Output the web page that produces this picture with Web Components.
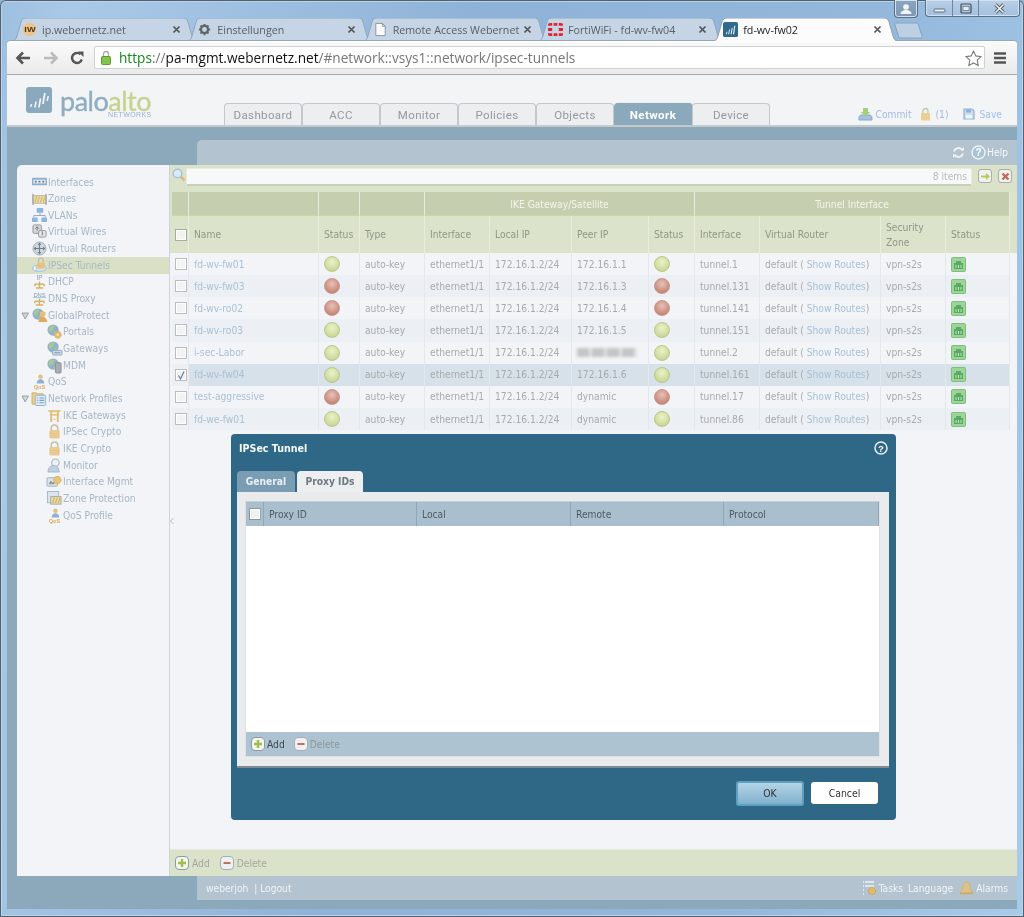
<!DOCTYPE html>
<html lang="en"><head><meta charset="utf-8"><title>fd-wv-fw02</title>
<style>
html,body{margin:0;padding:0;background:#8fb5da}
body{width:1024px;height:917px;overflow:hidden;font-family:"DejaVu Sans Condensed","DejaVu Sans",sans-serif;font-size:10.2px}
</style></head><body>
<x-window>
  <chrome-tab slot="tabs" icon="fav-ww" label="ip.webernetz.net"></chrome-tab>
  <chrome-tab slot="tabs" icon="fav-gear" label="Einstellungen"></chrome-tab>
  <chrome-tab slot="tabs" icon="fav-doc" label="Remote Access Webernet"></chrome-tab>
  <chrome-tab slot="tabs" icon="fav-forti" label="FortiWiFi - fd-wv-fw04"></chrome-tab>
  <chrome-tab slot="tabs" icon="fav-pa" label="fd-wv-fw02" active></chrome-tab>
  <chrome-toolbar slot="toolbar"></chrome-toolbar>
  <pa-header>
    <pa-tab>Dashboard</pa-tab><pa-tab>ACC</pa-tab><pa-tab>Monitor</pa-tab><pa-tab>Policies</pa-tab><pa-tab>Objects</pa-tab><pa-tab active>Network</pa-tab><pa-tab>Device</pa-tab>
  </pa-header>
  <pa-subbar></pa-subbar>
  <pa-body>
    <pa-nav slot="nav">
      <pa-item icon="interfaces">Interfaces</pa-item>
      <pa-item icon="zones">Zones</pa-item>
      <pa-item icon="vlans">VLANs</pa-item>
      <pa-item icon="vwires">Virtual Wires</pa-item>
      <pa-item icon="routers">Virtual Routers</pa-item>
      <pa-item icon="ipsec" selected>IPSec Tunnels</pa-item>
      <pa-item icon="dhcp">DHCP</pa-item>
      <pa-item icon="dns">DNS Proxy</pa-item>
      <pa-item icon="gp" open>GlobalProtect</pa-item>
      <pa-item icon="portals" child>Portals</pa-item>
      <pa-item icon="gateways" child>Gateways</pa-item>
      <pa-item icon="mdm" child>MDM</pa-item>
      <pa-item icon="qos">QoS</pa-item>
      <pa-item icon="profiles" open>Network Profiles</pa-item>
      <pa-item icon="torii" child>IKE Gateways</pa-item>
      <pa-item icon="lock" child>IPSec Crypto</pa-item>
      <pa-item icon="lock" child>IKE Crypto</pa-item>
      <pa-item icon="monitor" child>Monitor</pa-item>
      <pa-item icon="imgmt" child>Interface Mgmt</pa-item>
      <pa-item icon="zprot" child>Zone Protection</pa-item>
      <pa-item icon="qos" child>QoS Profile</pa-item>
    </pa-nav>
    <pa-search></pa-search>
    <pa-table-head></pa-table-head>
    <pa-row name="fd-wv-fw01" s1="g" peer="172.16.1.1" s2="g" tun="tunnel.1"></pa-row>
    <pa-row alt name="fd-wv-fw03" s1="r" peer="172.16.1.3" s2="r" tun="tunnel.131"></pa-row>
    <pa-row name="fd-wv-ro02" s1="r" peer="172.16.1.4" s2="r" tun="tunnel.141"></pa-row>
    <pa-row alt name="fd-wv-ro03" s1="g" peer="172.16.1.5" s2="g" tun="tunnel.151"></pa-row>
    <pa-row name="i-sec-Labor" s1="g" peer="" s2="g" tun="tunnel.2"></pa-row>
    <pa-row sel checked name="fd-wv-fw04" s1="g" peer="172.16.1.6" s2="g" tun="tunnel.161"></pa-row>
    <pa-row name="test-aggressive" s1="r" peer="dynamic" s2="r" tun="tunnel.17"></pa-row>
    <pa-row alt name="fd-we-fw01" s1="g" peer="dynamic" s2="g" tun="tunnel.86"></pa-row>
    <pa-actions slot="footer"></pa-actions>
  </pa-body>
  <pa-status></pa-status>
  <pa-dialog slot="over"></pa-dialog>
</x-window>
<script>
const svg=(b,w=16,h=16)=>`<svg xmlns="http://www.w3.org/2000/svg" width="${w}" height="${h}" viewBox="0 0 ${w} ${h}" style="display:block;overflow:visible">${b}</svg>`;
const globe=`<circle cx="6.5" cy="6.5" r="6" fill="#8fb2cf"/><path d="M2 4c2-3 5-3 6-2 1 2-2 2-2 4s-3 3-4 1zM8 8c2-1 4 0 3 2s-3 2-4 1z" fill="#a9c78f"/>`;
const person=`<circle cx="9" cy="3" r="2.4" fill="#e6bf7c"/><path d="M5 10c0-3 2-4.500 4-4.500s4 1.500 4 4.500z" fill="#8fb0d2"/><text x="8" y="15.500" font-size="6" font-weight="700" text-anchor="middle" font-family="Liberation Sans,sans-serif" fill="#e0a95b">QoS</text>`;
const lockI=`<path d="M4.500 7V4.500a3.500 3.500 0 0 1 7 0V7" fill="none" stroke="#c9bda6" stroke-width="1.600"/><rect x="3" y="7" width="10" height="8" rx="1" fill="#eccf94" stroke="#d9b878" stroke-width=".6"/><path d="M3.500 10h9M3.500 12.500h9" stroke="#dfbc78" stroke-width=".7"/>`;
const net=`<path d="M8 8v3M3 11h10M3 11v2M13 11v2M8 11v4M4 15h8" stroke="#d6b367" stroke-width="1.600" fill="none"/>`;
const ICONS={
 interfaces:`<rect x="0" y="3" width="16" height="8" rx="1" fill="#8eaecb"/><rect x="1.500" y="5" width="13" height="4" fill="#e9eef3"/><path d="M3 6h2v2H3zM7 6h2v2H7zM11 6h2v2h-2z" fill="#64788c"/>`,
 zones:`<path d="M1 5h14v8H1z" fill="#e9dfae" stroke="#b4b0a0" stroke-width="1"/><path d="M1 3v12M15 3v12" stroke="#a7a59a" stroke-width="1.300"/><path d="M3 12l2-6M6 12l2-6M9 12l2-6M12 12l2-6" stroke="#d9b86a" stroke-width="1.300"/>`,
 vlans:`<rect x="5" y="0" width="7" height="5" rx=".7" fill="#8db6dc"/><path d="M8.500 5v3M2 8h12M2 8v2M14 8v2" stroke="#8ba8c4"/><rect x="0" y="10" width="6" height="5" rx=".7" fill="#8db6dc"/><rect x="10" y="10" width="6" height="5" rx=".7" fill="#8db6dc"/>`,
 vwires:`<rect x="1" y="1" width="9" height="9" rx="1.500" fill="#d6d8d8" stroke="#8f959a"/><rect x="7" y="7" width="8" height="7" rx="1.500" fill="#e4e5e5" stroke="#8f959a"/><path d="M5.500 3v4M3.500 5l2-2 2 2M11 8v4" stroke="#72787e" fill="none"/>`,
 routers:`<circle cx="8" cy="8" r="7" fill="#ced5db" stroke="#a7b2bc"/><path d="M8 2.500v11M2.500 8h11M6.500 4L8 2.500 9.500 4M6.500 12L8 13.500 9.500 12M4 6.500L2.500 8 4 9.500M12 6.500L13.500 8 12 9.500" stroke="#6f7f8e" fill="none" stroke-width="1.100"/>`,
 ipsec:`<path d="M1 10c0-3 14-3 14 0v2c0 3-14 3-14 0z" fill="#d7e6f3" stroke="#a0c0db"/><ellipse cx="3" cy="11" rx="1.800" ry="3" fill="#eef4f8" stroke="#a0c0db" stroke-width=".8"/><path d="M7 5V2.500a2.500 2.500 0 0 1 5 0V5" fill="none" stroke="#c7b89d" stroke-width="1.300"/><rect x="5.500" y="5" width="8" height="6.500" rx="1" fill="#e7c37f"/>`,
 dhcp:`<text x="8" y="6.500" font-size="7" text-anchor="middle" font-family="Liberation Sans,sans-serif" fill="#7f9dba">IP</text>`+net,
 dns:`<text x="8" y="6" font-size="6.200" text-anchor="middle" font-family="Liberation Sans,sans-serif" fill="#7f9dba">DNS</text><path d="M1 7h14" stroke="#7f9dba" stroke-width=".6"/>`+net,
 gp:globe+`<circle cx="11.500" cy="6.500" r="3" fill="#e9bd7b"/><path d="M7 15c0-4 2-5.500 4.500-5.500S16 11 16 15z" fill="#e2a75c"/>`,
 portals:globe+`<circle cx="11.500" cy="11.500" r="3.600" fill="#e5bd72" stroke="#cf9f52" stroke-dasharray="1.500 .8"/><circle cx="11.500" cy="11.500" r="1.200" fill="#f4ead2"/>`,
 gateways:globe+`<rect x="6" y="10" width="10" height="5" rx="1" fill="#cdd9e4" stroke="#8faac2"/><path d="M8 12.500h6" stroke="#7d96ac"/>`,
 mdm:globe+`<rect x="9" y="5" width="6" height="11" rx="1" fill="#a8adb1" stroke="#8b9196"/>`,
 qos:person,
 profiles:`<path d="M0 2h5l1 1h6v11H0z" fill="#edcf8f" stroke="#d2ae69"/><rect x="3.500" y="4.500" width="11" height="11" rx="1" fill="#dce9f4" stroke="#8fb3d3"/><path d="M5.500 7.500h1M8 7.500h5M5.500 10h1M8 10h5M5.500 12.500h1M8 12.500h5" stroke="#7fa2c2" stroke-width="1.100"/>`,
 torii:`<path d="M1 2h14l-1 2.500H2zM3 6.500h10v1.700H3z" fill="#e5c88a"/><path d="M4.500 3v12M11.500 3v12" stroke="#e0bd78" stroke-width="2"/><path d="M7 12h2" stroke="#d7b069"/>`,
 lock:lockI,
 monitor:`<circle cx="9" cy="5" r="4" fill="#eef1f4" stroke="#a9b6c4" stroke-width="1.200"/><path d="M1 15c0-5 3-7 6-7s6 2 6 7z" fill="#bfd0e0" stroke="#94a9bd" stroke-width=".7"/>`,
 imgmt:`<rect x="0" y="4" width="11" height="9" rx="1" fill="#dde3e8" stroke="#9fb0bf"/><path d="M2 10l2-3 2 2 2-1v3H2z" fill="#8a9aa8"/><circle cx="11" cy="6.500" r="4" fill="#e7c47c" stroke="#d1a85b" stroke-dasharray="1.500 .8"/>`,
 zprot:`<rect x="0.500" y="0.500" width="12" height="12" fill="#dbe5ee" stroke="#a4b8ca"/><rect x="4" y="6" width="11" height="8" fill="#e9dfae" stroke="#a9a79b"/><path d="M6 13l2-6M9 13l2-6M12 13l2-6" stroke="#d0ae60" stroke-width="1.200"/>`,
 'fav-ww':`<circle cx="8" cy="8" r="7" fill="#eec184"/><text x="8.500" y="11" text-anchor="middle" font-size="8" font-weight="700" font-family="Liberation Sans,sans-serif" fill="#4c3a24" textLength="12" lengthAdjust="spacingAndGlyphs">IW</text>`,
 'fav-gear':`<g transform="translate(8 8)"><circle r="3.800" fill="none" stroke="#5f6468" stroke-width="2.300"/><path d="M-1 -6h2v2h-2zM-1 4h2v2h-2zM-6 -1h2v2h-2zM4 -1h2v2h-2z" fill="#5f6468"/><g transform="rotate(45)"><path d="M-1 -6h2v2h-2zM-1 4h2v2h-2zM-6 -1h2v2h-2zM4 -1h2v2h-2z" fill="#5f6468"/></g></g>`,
 'fav-doc':`<path d="M3 1.500h7l3 3v10H3z" fill="#fbfbfb" stroke="#8c9297"/><path d="M10 1.500v3h3" fill="none" stroke="#8c9297"/>`,
 'fav-forti':`<path d="M0 3a2 2 0 0 1 2-2h2.500v3H0zM6 1h4v3H6zM11.500 1H14a2 2 0 0 1 2 2v1h-4.500zM0 6.500h4.500v3H0zM11.500 6.500H16v3h-4.500zM0 12h4.500v3H2a2 2 0 0 1-2-2zM6 12h4v3H6zM11.500 12H16v1a2 2 0 0 1-2 2h-2.500z" fill="#e3222b"/>`,
 'fav-pa':`<rect width="16" height="16" rx="2" fill="#2e6a8d"/><path d="M3 13l.8-2.500h1L4 13zM5.500 13l1-5h1l-1 5zM8 13l1.200-7h1.100L9.200 13zM10.500 13l1.500-9h1.200L11.800 13z" fill="#e6eef2"/>`
};
function def(tag,css,html){
  customElements.define(tag,class extends HTMLElement{
    constructor(){super();this.attachShadow({mode:'open'});}
    connectedCallback(){this.shadowRoot.innerHTML=`<style>${css}</style>`+(typeof html==='function'?html(this):html);}
  });
}
const Ic=(n)=>`<x-icon name="${n}"></x-icon>`;
customElements.define('x-icon',class extends HTMLElement{
  constructor(){super();this.attachShadow({mode:'open'});}
  connectedCallback(){this.shadowRoot.innerHTML=`<style>:host{display:block;flex:none;width:16px;height:16px}svg{width:15px;height:15px;margin:.5px 0 0 0}</style>`+svg(ICONS[this.getAttribute('name')]||'');}
});

def('x-window',`
:host{display:flex;flex-direction:column;position:relative;box-sizing:border-box;width:1024px;height:917px;padding:0 7px 8px;
 background:linear-gradient(100deg,#9dbfe0 0,#a9c9e8 6%,#8fb3d8 40%,#93b8dc 75%,#a8cbea 100%);box-shadow:inset 0 0 0 1px #52606e,inset 0 0 0 2px #bcd3ea;border-radius:6px 6px 0 0;filter:blur(.45px)}
.tabs{display:flex;height:41px;box-sizing:border-box;padding:18px 0 0 5px;flex:none}
.new{width:28px;height:15px;margin:5px 0 0 6px;flex:none}
.ctl{position:absolute;top:0;display:flex;height:17px;background:linear-gradient(#b9cfe6,#a3c0de);border:1px solid #5d6f82;border-top:0;box-sizing:border-box;border-radius:0 0 4px 4px;box-shadow:inset 0 0 0 1px #d3e2f0}
.ctl span{display:flex;align-items:center;justify-content:center;border-left:1px solid #6f869c}
.ctl span:first-child{border-left:0}
.usr{left:894px;width:24px;height:18px;justify-content:center;align-items:center;background:linear-gradient(#8ba5c0,#7f97b0)}
.min{left:925px;width:95px}
.pane{display:flex;flex-direction:column;flex:1;min-height:0;background:#8ba9bb}
`,`<div class="tabs"><slot name="tabs"></slot><div class="new">${svg('<path d="M1 0h20c1.500 0 2 .5 2.500 2L27 13c.3 1 0 2-1.500 2H6c-1.500 0-2-.5-2.500-2L0 2C-.3 1 0 0 1 0z" fill="#bcd0e4" stroke="#88a3bd"/>',28,15)}</div></div>
<div class="ctl usr">${svg('<circle cx="7" cy="4" r="2.800" fill="#f2f5f8"/><path d="M1.500 11c0-3 3-4 5.500-4s5.500 1 5.500 4z" fill="#f2f5f8"/>',14,12)}</div>
<div class="ctl min"><span style="width:26px">${svg('<rect x="1" y="5" width="11" height="3" rx=".8" fill="#eef3f8" stroke="#5e6c7a"/>',13,9)}</span><span style="width:25px">${svg('<rect x="1" y="1" width="10" height="9" rx="1" fill="none" stroke="#42505e" stroke-width="1.200"/><rect x="3" y="3.500" width="6" height="4" fill="#e8eef5" stroke="#5e6c7a" stroke-width=".7"/>',12,11)}</span><span style="flex:1">${svg('<path d="M1.500 1.500l8 8M9.500 1.500l-8 8" stroke="#4b5966" stroke-width="3.200"/><path d="M1.500 1.500l8 8M9.500 1.500l-8 8" stroke="#f3f6f9" stroke-width="1.500"/>',11,11)}</span></div>
<slot name="toolbar"></slot>
<div class="pane"><slot></slot></div>
<slot name="over"></slot>`);

def('chrome-tab',`
:host{display:block;position:relative;width:185px;height:23px;margin-right:-9.7px;font:10.7px "Open Sans",sans-serif;color:#585e64;flex:none}
:host([active]){z-index:2;color:#222}
svg.bg{position:absolute;left:0;top:0}
.in{position:relative;display:flex;align-items:center;height:23px;padding-left:10px;box-sizing:border-box}
x-icon{margin-right:4px}
.t{width:130px;white-space:nowrap}
.x{position:absolute;left:160px;top:7px}
`,e=>{const a=e.hasAttribute('active');const label=e.getAttribute('label');
return `<svg class="bg" width="185" height="23" viewBox="0 0 185 23"><path d="M0 23c3 0 4-2 5-5l4-14c1-3 2-4 5-4h157c3 0 4 1 5 4l4 14c1 3 2 5 5 5" fill="${a?'#fcfcfc':'#c5d5e5'}" stroke="${a?'#8da2b8':'#8fa8c0'}"/></svg>
<div class="in">${Ic(e.getAttribute('icon'))}<div class="t">${label}</div></div>
<div class="x">${svg('<path d="M1.500 1.500l6 6M7.500 1.500l-6 6" stroke="#555" stroke-width="1.700"/>',9,9)}</div>`});

def('chrome-toolbar',`
:host{display:flex;align-items:center;position:relative;height:34px;flex:none;box-sizing:border-box;padding:0 0 0 9px;background:linear-gradient(#fafafa,#ebebeb);border-bottom:1px solid #a7aaad;border-radius:4px 4px 0 0;box-shadow:inset 0 1px 0 #fff,0 -1px 0 #93a8bd}
.n{display:flex;align-items:center;width:27px}
.addr{flex:none;display:flex;align-items:center;margin-left:-1px;width:891px;height:23px;box-sizing:border-box;background:#fff;border:1px solid #cfd1d3;border-radius:2px;padding-left:6px;font:13.65px "Open Sans",sans-serif;color:#777;white-space:nowrap}
.g{color:#12891a}.k{color:#111}
.lk{margin-right:8px}
.star{margin-left:auto;margin-right:2px}
.menu{margin-left:9px}
`,`<div class="n">${svg('<path d="M7 1.500L1.500 7 7 12.500M2 7h12" fill="none" stroke="#555" stroke-width="2.600"/>',15,14)}</div>
<div class="n">${svg('<path d="M8 1.500L13.500 7 8 12.500M13 7H1" fill="none" stroke="#b9bbbd" stroke-width="2.600"/>',15,14)}</div>
<div class="n" style="width:25px">${svg('<path d="M11.800 8.500A5 5 0 1 1 10.500 3.300" fill="none" stroke="#555" stroke-width="2.400"/><path d="M8 .5h5.500V6z" fill="#555"/>',14,14)}</div>
<div class="addr"><span class="lk">${svg('<path d="M2.500 7V4a2.500 2.500 0 0 1 5 0v3" fill="none" stroke="#a8a8a8" stroke-width="1.300"/><rect x=".5" y="6.500" width="9" height="8" rx="1" fill="#84c34c" stroke="#5f9a2e"/>',10,15)}</span><span class="g">https</span>://<span class="k">pa-mgmt.webernetz.net</span>/#network::vsys1::network/ipsec-tunnels
<span class="star">${svg('<path d="M8.500 1l2.300 4.900 5.200.7-3.800 3.600 1 5.300-4.700-2.600-4.700 2.600 1-5.300L1 6.600l5.200-.7z" fill="#fff" stroke="#7a7d80" stroke-width="1.100"/>',17,16)}</span></div>
<div class="menu">${svg('<path d="M0 1.500h12M0 6h12M0 10.500h12" stroke="#555" stroke-width="2.400"/>',12,12)}</div>`);

def('pa-header',`
:host{display:flex;align-items:flex-end;height:52px;box-sizing:border-box;flex:none;background:#f3f4f6;border-bottom:2px solid #c7cacd;position:relative}
.logo{width:217px;align-self:stretch;display:flex;box-sizing:border-box;padding:12px 0 0 19px;flex:none}
.word{margin-left:8px;position:relative;font:27px/27px Lato,sans-serif;color:#8fadc0;letter-spacing:-.5px;height:30px;-webkit-text-stroke:.35px currentColor}
.word b{font-weight:400;color:#c6d38f}
.word small{position:absolute;left:48px;top:24px;font:7px/8px "Liberation Sans",sans-serif;letter-spacing:.4px;color:#9ab3c9;-webkit-text-stroke:0}
.right{margin-left:auto;display:flex;align-items:center;height:22px;font-size:10.2px;color:#a1bce6;padding-right:15px}
.right span{margin-left:3px}
`,`<div class="logo">${svg('<rect width="26" height="26" rx="3" fill="#8aa9bd"/><path d="M4 20l.8-3h1.500L5.500 20zM8 20.500l1.300-6h1.600l-1.300 6zM12 20.500l1.700-9h1.700l-1.700 9zM16 17l2-11h1.800l-2 11zM20.500 14l1-5h1.500l-1 5z" fill="#f1f4f6"/>',26,26)}<div class="word">palo<b>alto</b><small>NETWORKS</small></div></div>
<slot></slot>
<div class="right">${svg('<path d="M1 11c0-2 1-3 3-3h7c2 0 3 1 3 3v2H1z" fill="#a4c2dd" stroke="#87a9c7"/><path d="M5 1h5v4h2.500L7.500 9l-5-4H5z" fill="#a4cf7c"/>',15,15)}<span style="margin:0 8px 0 3px">Commit</span>${svg('<path d="M3 6V4a2.500 2.500 0 0 1 5 0v2" fill="none" stroke="#c7c0b0" stroke-width="1.300"/><rect x="1" y="6" width="9" height="7.500" rx="1" fill="#eccf94"/>',11,14)}<span style="margin:0 14px 0 5px">(1)</span>${svg('<path d="M1 1h8l2 2v8H1z" fill="#cfdff0" stroke="#8db0d6" stroke-width="1.200"/><rect x="3" y="1.500" width="5" height="3" fill="#8db0d6"/><rect x="3" y="7" width="6" height="3.500" fill="#eef4fa"/>',12,12)}<span style="margin-left:5px">Save</span></div>`);

def('pa-tab',`
:host{display:flex;align-items:center;justify-content:center;width:78px;height:22px;box-sizing:border-box;padding-top:1px;background:#eceef0;border:1px solid #c5c8ca;border-bottom:0;border-radius:4px 4px 0 0;font:11.5px Roboto,sans-serif;letter-spacing:.35px;color:#94999c}
:host([active]){background:#8ba9bb;border-color:#8ba9bb;color:#fff;font-weight:700;box-shadow:1px 0 1px #aab;letter-spacing:.45px}
`,`<slot></slot>`);

def('pa-subbar',`
:host{display:block;flex:none;height:38px;box-sizing:border-box;padding:13px 0 0 190px;background:#8ba9bb}
.b{height:25px;background:#b3c4d0;border-radius:5px 0 0 0;display:flex;justify-content:flex-end;align-items:center;padding-right:9px;color:#f4f7f8;font-size:10.2px}
.b svg{margin-right:6px}
`,`<div class="b">${svg('<path d="M2 5.500a4.700 4.700 0 0 1 8.500-1.300M11 7.500a4.700 4.700 0 0 1-8.500 1.300" fill="none" stroke="#eef2f4" stroke-width="1.800"/><path d="M8.500 4.500H12V1zM4.500 8.500H1V12z" fill="#eef2f4"/>',13,13)}${svg('<circle cx="7.500" cy="7.500" r="6.500" fill="#a9c3d6" stroke="#eef3f5" stroke-width="1.400"/><text x="7.500" y="11" text-anchor="middle" font-size="10" font-weight="700" font-family="Liberation Sans,sans-serif" fill="#fff">?</text>',15,15).replace('display:block','display:block;margin-right:1px')}Help</div>`);

def('pa-body',`
:host{display:flex;flex:1;min-height:0;box-sizing:border-box;padding-left:10px;background:#8ba9bb}
.nav{flex:none;background:#f2f4f7;border-radius:5px 0 0 0;border-right:1px solid #ccd3da;width:153px;box-sizing:border-box}
.main{flex:1;min-width:0;display:flex;flex-direction:column;background:#f2f4f7;position:relative}
.fill{flex:1}
.split{position:absolute;left:0;top:353px}
`,`<div class="nav"><slot name="nav"></slot></div><div class="main"><slot></slot><div class="fill"></div><slot name="footer"></slot><div class="split">${svg('<path d="M3.500 0L.5 3l3 3" fill="none" stroke="#b5bcc3"/>',4,6)}</div></div>`);

def('pa-nav',`:host{display:block;padding-top:8.7px}`,`<slot></slot>`);

def('pa-item',`
:host{display:flex;align-items:center;height:16.67px;box-sizing:border-box;padding-left:15px;white-space:nowrap;color:#a8b7c5;font-size:10.2px}
:host([child]){padding-left:30px}
:host([selected]){background:#d9e0c6}
:host([open]){padding-left:4px}
.a{width:11px;flex:none}
`,e=>`${e.hasAttribute('open')?`<div class="a">${svg('<path d="M1 2h6.500L4.200 8z" fill="#cfd5d9" stroke="#9aa3a9"/>',9,9)}</div>`:''}${Ic(e.getAttribute('icon'))}<slot></slot>`);

def('pa-search',`
:host{display:flex;align-items:flex-start;height:27px;box-sizing:border-box;flex:none;background:#dbe2ca;padding:3px 0 0 2px}
.i{width:14px;height:15px}
.f{width:786px;height:18px;box-sizing:border-box;background:#f7f8f8;border:1px solid #e8ebe0;border-bottom:2px solid #c9cfbb;border-radius:2px;text-align:right;padding:2px 4px 0;color:#b9bcb9;font-size:10.2px}
.b{width:14px;height:14px;box-sizing:border-box;margin-top:1px;border:1px solid #a9aea6;border-radius:3px;background:#f1f2ee;display:flex;align-items:center;justify-content:center}
`,`<div class="i">${svg('<path d="M8.500 8.500l4 4" stroke="#e5b880" stroke-width="2.500"/><circle cx="5.500" cy="5.500" r="4.300" fill="#dbeaf6" stroke="#a6c3dc" stroke-width="1.500"/>',14,14)}</div><div class="f">8 items</div>
<div class="b" style="margin-left:6px">${svg('<path d="M1 4.500h6" stroke="#b9c95e" stroke-width="2"/><path d="M6 1l4 3.500L6 8z" fill="#b9c95e"/>',10,9)}</div>
<div class="b" style="margin-left:6px">${svg('<path d="M1.500 1.500l6 6M7.500 1.500l-6 6" stroke="#bf6d5e" stroke-width="2.400"/>',9,9)}</div>`);

const COLS='grid-template-columns:17px 130px 41px 65px 65px 82px 77px 46px 65px 121px 65px 64px';
def('pa-table-head',`
:host{display:block;flex:none;background:#dbe3cb;padding-left:2px}
.g{display:grid;${COLS};width:838px;grid-template-rows:24px 37px;color:#92978a;font-size:10.2px}
.g>div{display:flex;align-items:center;padding-left:5px;box-sizing:border-box;border-right:1px solid #e9eddd;line-height:15px}
.t{background:#c5cfb0;color:#f3f5ea;justify-content:center;padding-left:0!important;border-bottom:1px solid #c9d6a6;padding-top:1px}
.c{padding-left:3px!important}
.cb{width:12px;height:12px;box-sizing:border-box;border:1px solid #a7aca0;background:#f3f4f0;box-shadow:inset 0 0 0 1px #fff}
`,`<div class="g"><div class="t"></div><div class="t"></div><div class="t"></div><div class="t"></div><div class="t" style="grid-column:span 4">IKE Gateway/Satellite</div><div class="t" style="grid-column:span 4">Tunnel Interface</div>
<div class="c"><div class="cb"></div></div>${['Name','Status','Type','Interface','Local IP','Peer IP','Status','Interface','Virtual Router','Security<br>Zone','Status'].map(x=>`<div><span>${x}</span></div>`).join('')}</div>`);

const dot=c=>`<div class="dot ${c}"></div>`;
def('pa-row',`
:host{display:block;flex:none;padding-left:2px;height:22.15px}
.g{display:grid;${COLS};width:838px;height:22.15px;background:#f3f4f7;color:#a7abae;font-size:10.2px;white-space:nowrap}
:host([alt]) .g{background:#eceff3}
:host([sel]) .g{background:#d6e1e9}
:host([sel]) .c{background:#edeff2}
.g>div{display:flex;align-items:center;padding-left:5px;box-sizing:border-box;border-right:1px solid #e4e7eb}
.c{padding-left:3px!important}
.cb{width:12px;height:12px;box-sizing:border-box;border:1px solid #b9bdc1;background:#f2f3f5;box-shadow:inset 0 0 0 1px #fff;position:relative}
.l{color:#a9c1d6}
.dot{width:16px;height:16px;border-radius:50%;box-sizing:border-box;border:1px solid #b8c98b}
.dot.g1{background:radial-gradient(circle at 50% 35%,#ecf2c8,#cbd99a 70%,#b9ca82)}
.dot.r1{background:radial-gradient(circle at 50% 35%,#e6c3b8,#c9897a 70%,#b8796a);border-color:#c4988d}
.blob{width:60px;height:9px;filter:blur(1.500px);background:repeating-linear-gradient(90deg,#c3c6c9 0 12px,#dfe1e4 12px 15px)}
`,e=>{const A=n=>e.getAttribute(n),s=v=>dot(v==='g'?'g1':'r1');
return `<div class="g"><div class="c"><div class="cb">${e.hasAttribute('checked')?svg('<path d="M2.500 5.500L4.500 9 8 1.500" fill="none" stroke="#6a78b0" stroke-width="1.200"/>',10,10):''}</div></div>
<div class="l">${A('name')}</div><div>${s(A('s1'))}</div><div>auto-key</div><div>ethernet1/1</div><div>172.16.1.2/24</div><div>${A('peer')||'<div class="blob"></div>'}</div><div>${s(A('s2'))}</div><div>${A('tun')}</div><div>default (&nbsp;<span class="l">Show Routes</span>)</div><div>vpn-s2s</div>
<div>${svg('<rect x=".5" y=".5" width="14" height="14" rx="1" fill="#9ed39a" stroke="#7cc07c"/><path d="M3 12V6h2V4h5v2h2v6z" fill="#5aaa66"/><path d="M5 8v3M7.500 8v3M10 8v3" stroke="#bfe6bc"/>',15,15)}</div></div>`});

const addI=`<rect x=".5" y=".5" width="13" height="13" rx="3.500" fill="#f3f5ef" stroke="#8f9aa3"/><path d="M7 3v8M3 7h8" stroke="#a3bd4d" stroke-width="2.400"/>`;
const delI=`<rect x=".5" y=".5" width="13" height="13" rx="3.500" fill="#eef0f1" stroke="#a4adb4"/><path d="M3.500 7h7" stroke="#c0705f" stroke-width="2"/>`;
def('pa-actions',`
:host{display:flex;align-items:center;flex:none;height:27px;box-sizing:border-box;background:#dbe2ca;padding-left:5px;border-top:1px solid #e6e9df;color:#a3a89c;font-size:10.2px}
span{margin:0 10px 0 3px}
`,`${svg(addI,14,14)}<span>Add</span>${svg(delI,14,14)}<span>Delete</span>`);

def('pa-status',`
:host{display:block;flex:none;height:33px;box-sizing:border-box;padding:0 0 9px 190px;background:#8ba9bb}
.b{height:24px;background:#b3c4d0;display:flex;align-items:center;padding-left:9px;color:#f1f4f6;font-size:10.2px;white-space:nowrap}
.r{margin-left:auto;display:flex;align-items:center;padding-right:9px}
`,`<div class="b"><span style="color:#f0f3f5">weberjoh&nbsp; | Logout</span><div class="r">${svg('<path d="M3 1h9M3 5h9M1 1h1M1 5h1M1 9h1M1 13h1" stroke="#eef2f5" stroke-width="1.300"/><circle cx="10" cy="10" r="3.600" fill="#e2bc6b" stroke="#c89d4a" stroke-dasharray="1.500 .8"/>',14,15)}<span style="margin:0 5px 0 3px">Tasks</span><span style="margin-right:6px">Language</span>${svg('<path d="M7.500 1c3 0 3.500 2.500 3.800 5 .3 2.500 1.200 4 2.700 6H1c1.500-2 2.400-3.500 2.700-6S4.500 1 7.500 1z" fill="#dcc284" stroke="#c9ab69" stroke-width=".6"/><path d="M1 12.500h13" stroke="#c9ab69" stroke-width="1.500"/>',15,15)}<span style="margin-left:2px">Alarms</span></div></div>`);

def('pa-dialog',`
:host{position:absolute;left:231px;top:434px;width:665px;height:386px;box-sizing:border-box;background:#2f6786;border-radius:4px;padding:0 7px 0 6px;display:flex;flex-direction:column;font-size:10.2px}
.h{height:37px;flex:none;display:flex;justify-content:space-between;padding:7px 1px 0 2px;box-sizing:border-box;color:#f4f7f9;font-weight:700;font-size:10.6px;line-height:14px}
.tabs{height:21px;flex:none;display:flex;font-weight:700}
.tabs div{display:flex;align-items:center;justify-content:center;box-sizing:border-box;border-radius:4px 4px 0 0;height:21px}
.t1{width:58px;background:#7a9db3;color:#e9eff3;margin-right:2px}
.t2{width:66px;background:#eceef0;color:#6e7a84}
.p{height:276px;flex:none;box-sizing:border-box;background:#eaebed;border-bottom:2px solid #7f8b93;padding:9px 9px 9px 8px}
.gr{height:256px;border:1px solid #dfe2e5;border-top-color:#c9ced2;box-sizing:border-box;display:flex;flex-direction:column;width:635px}
.th{height:24px;flex:none;display:grid;grid-template-columns:18px 153px 154px 153px 155px;background:#a9bfce;color:#4d5a64;box-sizing:border-box}
.th div{display:flex;align-items:center;padding-left:5px;box-sizing:border-box;border-right:1px solid #8ea8b9}
.cb{width:12px;height:12px;box-sizing:border-box;border:1px solid #8c9499;background:#eef0f2;box-shadow:inset 0 0 0 1px #fff}
.bd{flex:1;background:#fff}
.ft{height:24px;flex:none;background:#aec3d1;display:flex;align-items:center;padding-left:5px;color:#3f4a50}
.ft span{margin:0 9px 0 2px}
.ft .d{color:#8b979e}
.btns{flex:1;display:flex;justify-content:flex-end;align-items:center;padding:0 11px 2px 0;gap:7px}
button{font:10.4px "DejaVu Sans Condensed","DejaVu Sans",sans-serif;color:#333;border-radius:3px;box-sizing:border-box;padding:0}
.ok{width:68px;height:25px;border:2px solid #5f9fc0;background:linear-gradient(#b4d4e6,#80b1cd)}
.ca{width:67px;height:22px;border:0;background:#fff}
`,`<div class="h"><span>IPSec Tunnel</span>${svg('<circle cx="7" cy="7" r="6" fill="#2f6786" stroke="#eaf0f4" stroke-width="1.500"/><text x="7" y="10.500" text-anchor="middle" font-size="9.500" font-weight="700" font-family="Liberation Sans,sans-serif" fill="#fff">?</text>',14,14)}</div>
<div class="tabs"><div class="t1">General</div><div class="t2">Proxy IDs</div></div>
<div class="p"><div class="gr"><div class="th"><div style="padding-left:3px"><div class="cb"></div></div><div>Proxy ID</div><div>Local</div><div>Remote</div><div>Protocol</div></div><div class="bd"></div>
<div class="ft">${svg(addI,14,14)}<span>Add</span>${svg(delI,14,14)}<span class="d">Delete</span></div></div></div>
<div class="btns"><button class="ok">OK</button><button class="ca">Cancel</button></div>`);
</script>
</body></html>
